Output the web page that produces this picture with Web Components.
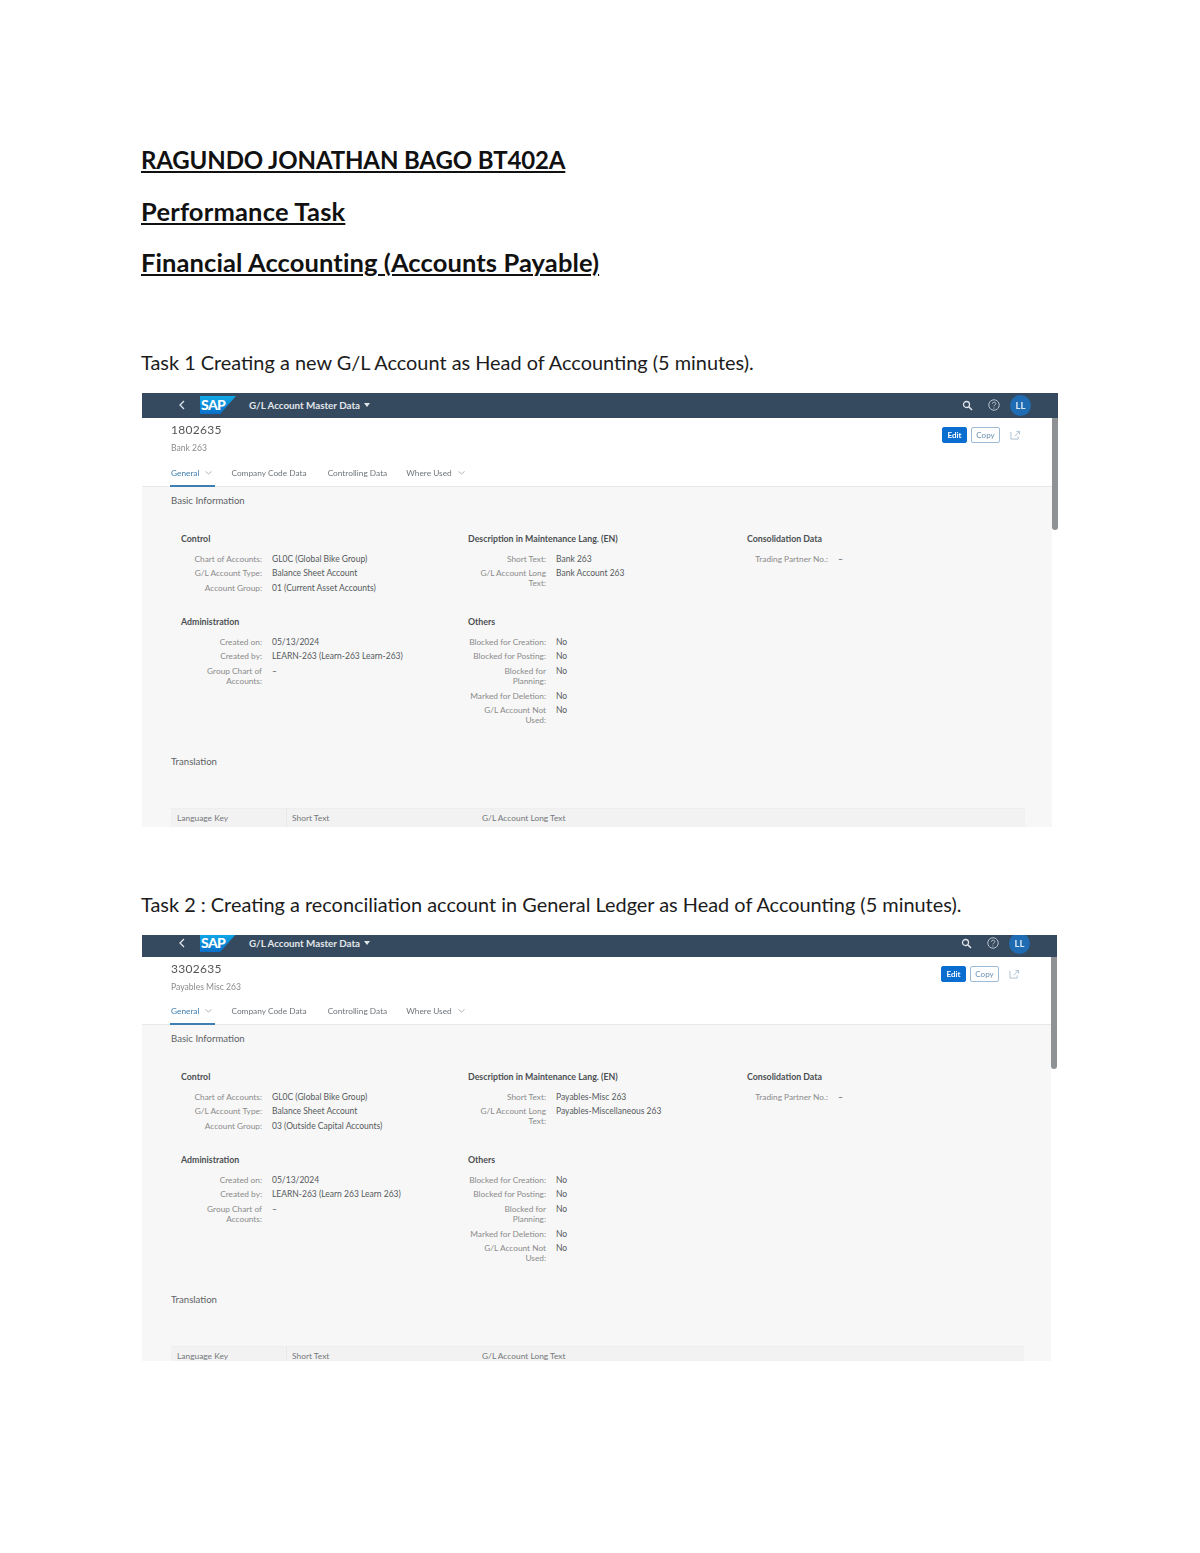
<!DOCTYPE html>
<html lang="en">
<head>
<meta charset="utf-8">
<title>Performance Task</title>
<style>
html,body{margin:0;background:#fff;}
body{font-family:"Lato","Liberation Sans",sans-serif;}
</style>
</head>
<body>
<doc-page>
  <doc-heading size="24" track="-.13">RAGUNDO JONATHAN BAGO BT402A</doc-heading>
  <doc-heading size="25.5" track=".19" style="margin-top:-1px">Performance Task</doc-heading>
  <doc-heading size="25.5" track=".1">Financial Accounting (Accounts Payable)</doc-heading>

  <doc-task style="margin-top:52px">Task 1 Creating a new G/L Account as Head of Accounting (5 minutes).</doc-task>
  <sap-screen account="1802635" name="Bank 263" width="916" height="434" bar="25" head="43" lift="0">
    <sap-group slot="c1" heading="Control">
      <sap-field label="Chart of Accounts:">GL0C (Global Bike Group)</sap-field>
      <sap-field label="G/L Account Type:">Balance Sheet Account</sap-field>
      <sap-field label="Account Group:">01 (Current Asset Accounts)</sap-field>
    </sap-group>
    <sap-group slot="c2" heading="Description in Maintenance Lang. (EN)" wide>
      <sap-field label="Short Text:">Bank 263</sap-field>
      <sap-field label="G/L Account Long&#10;Text:">Bank Account 263</sap-field>
    </sap-group>
    <sap-group slot="c3" heading="Consolidation Data">
      <sap-field label="Trading Partner No.:">–</sap-field>
    </sap-group>
    <sap-group slot="a1" heading="Administration">
      <sap-field label="Created on:">05/13/2024</sap-field>
      <sap-field label="Created by:">LEARN-263 (Learn-263 Learn-263)</sap-field>
      <sap-field label="Group Chart of&#10;Accounts:">–</sap-field>
    </sap-group>
    <sap-group slot="a2" heading="Others" wide>
      <sap-field label="Blocked for Creation:">No</sap-field>
      <sap-field label="Blocked for Posting:">No</sap-field>
      <sap-field label="Blocked for&#10;Planning:">No</sap-field>
      <sap-field label="Marked for Deletion:">No</sap-field>
      <sap-field label="G/L Account Not&#10;Used:">No</sap-field>
    </sap-group>
  </sap-screen>

  <doc-task style="margin-top:63px">Task 2 : Creating a reconciliation account in General Ledger as Head of Accounting (5 minutes).</doc-task>
  <sap-screen account="3302635" name="Payables Misc 263" width="915" height="426" bar="22" head="42" lift="5">
    <sap-group slot="c1" heading="Control">
      <sap-field label="Chart of Accounts:">GL0C (Global Bike Group)</sap-field>
      <sap-field label="G/L Account Type:">Balance Sheet Account</sap-field>
      <sap-field label="Account Group:">03 (Outside Capital Accounts)</sap-field>
    </sap-group>
    <sap-group slot="c2" heading="Description in Maintenance Lang. (EN)" wide>
      <sap-field label="Short Text:">Payables-Misc 263</sap-field>
      <sap-field label="G/L Account Long&#10;Text:">Payables-Miscellaneous 263</sap-field>
    </sap-group>
    <sap-group slot="c3" heading="Consolidation Data">
      <sap-field label="Trading Partner No.:">–</sap-field>
    </sap-group>
    <sap-group slot="a1" heading="Administration">
      <sap-field label="Created on:">05/13/2024</sap-field>
      <sap-field label="Created by:">LEARN-263 (Learn 263 Learn 263)</sap-field>
      <sap-field label="Group Chart of&#10;Accounts:">–</sap-field>
    </sap-group>
    <sap-group slot="a2" heading="Others" wide>
      <sap-field label="Blocked for Creation:">No</sap-field>
      <sap-field label="Blocked for Posting:">No</sap-field>
      <sap-field label="Blocked for&#10;Planning:">No</sap-field>
      <sap-field label="Marked for Deletion:">No</sap-field>
      <sap-field label="G/L Account Not&#10;Used:">No</sap-field>
    </sap-group>
  </sap-screen>
</doc-page>

<script>
class DocPage extends HTMLElement {
  constructor() {
    super();
    this.attachShadow({ mode: 'open' });
    this.shadowRoot.innerHTML = `
<style>
:host{display:block;box-sizing:border-box;height:1553px;padding:142px 0 0 141px;background:#fff;overflow:hidden;}
</style>
<slot></slot>`;
  }
}
customElements.define('doc-page', DocPage);

class DocHeading extends HTMLElement {
  constructor() {
    super();
    this.attachShadow({ mode: 'open' });
    this.shadowRoot.innerHTML = `
<style>
:host{display:block;height:51.5px;line-height:36px;font-weight:700;color:#111;text-decoration:underline;text-decoration-thickness:2px;text-underline-offset:2px;white-space:nowrap;}
</style>
<slot></slot>`;
  }
  connectedCallback() {
    this.style.fontSize = this.getAttribute('size') + 'px';
    this.style.letterSpacing = this.getAttribute('track') + 'px';
  }
}
customElements.define('doc-heading', DocHeading);

class DocTask extends HTMLElement {
  constructor() {
    super();
    this.attachShadow({ mode: 'open' });
    this.shadowRoot.innerHTML = `
<style>
:host{display:block;height:30px;line-height:28px;margin-bottom:15px;font-size:19.9px;color:#1c1c1c;white-space:nowrap;}
</style>
<slot></slot>`;
  }
}
customElements.define('doc-task', DocTask);

class SapField extends HTMLElement {
  constructor() {
    super();
    this.attachShadow({ mode: 'open' });
    this.shadowRoot.innerHTML = `
<style>
:host{display:grid;grid-template-columns:var(--label-w,81px) 1fr;column-gap:10px;font-size:8.5px;line-height:10px;margin-bottom:4.7px;}
.l{color:#8b8b8b;text-align:right;white-space:pre;font-size:8.3px;}
.v{color:#55595c;white-space:nowrap;}
</style>
<div class="l"></div><div class="v"><slot></slot></div>`;
    this.shadowRoot.querySelector('.l').textContent = this.getAttribute('label');
  }
}
customElements.define('sap-field', SapField);

class SapGroup extends HTMLElement {
  constructor() {
    super();
    this.attachShadow({ mode: 'open' });
    this.shadowRoot.innerHTML = `
<style>
:host{display:block;}
.t{font-size:8.8px;font-weight:700;color:#4c5053;line-height:10px;margin-bottom:10px;white-space:nowrap;}
</style>
<div class="t"></div><slot></slot>`;
    this.shadowRoot.querySelector('.t').textContent = this.getAttribute('heading');
  }
  connectedCallback() {
    this.style.setProperty('--label-w', this.hasAttribute('wide') ? '78px' : '81px');
  }
}
customElements.define('sap-group', SapGroup);

class SapShellBar extends HTMLElement {
  constructor() {
    super();
    this.attachShadow({ mode: 'open' });
    this.shadowRoot.innerHTML = `
<style>
:host{display:flex;align-items:center;flex:none;box-sizing:border-box;background:#354a5f;color:#fff;padding:0 27px var(--lift,0) 37px;font-size:9.8px;}
.back{flex:none;width:6px;height:10px;margin-right:15px;}
.logo{flex:none;width:36px;height:18px;margin-right:13px;background:linear-gradient(#0fa9e8,#0a6fc9);clip-path:polygon(0 0,100% 0,56% 100%,0 100%);}
.logo span{display:block;font-size:14px;font-weight:900;line-height:18px;padding-left:1px;letter-spacing:-.6px;}
.title{font-weight:700;color:#e3e7eb;white-space:nowrap;}
.caret{width:0;height:0;border:3px solid transparent;border-top:4px solid #e3e7eb;border-bottom:0;margin-left:4px;}
.spacer{flex:1;}
svg.ic{flex:none;width:11px;height:11px;margin-right:15px;}
svg.help{flex:none;width:12px;height:12px;margin-right:10px;}
.avatar{flex:none;width:21px;height:21px;border-radius:50%;background:#1f6cb3;color:#dfe9f3;font-size:9.5px;font-weight:700;display:flex;align-items:center;justify-content:center;}
</style>
<svg class="back" viewBox="0 0 6 10"><path d="M5 1 1 5l4 4" fill="none" stroke="#dfe5ea" stroke-width="1.3"/></svg>
<div class="logo"><span>SAP</span></div>
<span class="title">G/L Account Master Data</span><span class="caret"></span>
<span class="spacer"></span>
<svg class="ic" viewBox="0 0 11 11"><circle cx="4.500" cy="4.500" r="3" fill="none" stroke="#dfe5ea" stroke-width="1.300"/><path d="m7 7 3 3" stroke="#dfe5ea" stroke-width="1.600"/></svg>
<svg class="help" viewBox="0 0 11 11"><circle cx="5.500" cy="5.500" r="4.800" fill="none" stroke="#b9c3cc" stroke-width=".9"/><path d="M4 4.400c0-2 3.200-2 3.200-.1C7.200 5.500 5.500 5.300 5.500 6.800M5.500 7.800v1" fill="none" stroke="#b9c3cc" stroke-width=".9"/></svg>
<div class="avatar">LL</div>`;
  }
}
customElements.define('sap-shell-bar', SapShellBar);

class SapTabs extends HTMLElement {
  constructor() {
    super();
    this.attachShadow({ mode: 'open' });
    const chev = '<svg width="7" height="4" viewBox="0 0 7 4"><path d="M.5.500 3.500 3l3-2.500" fill="none" stroke="#9aa3aa" stroke-width=".8"/></svg>';
    this.shadowRoot.innerHTML = `
<style>
:host{display:flex;flex:none;height:26px;padding-left:28px;font-size:8.3px;color:#70767b;border-bottom:1px solid #e8e8e8;box-sizing:border-box;}
.tab{display:flex;align-items:center;gap:6px;padding:0 1px;margin-right:19px;height:24px;border-bottom:2px solid transparent;white-space:nowrap;}
.tab.on{color:#3f7eb0;border-bottom-color:#3f7eb0;margin-right:15px;padding-right:3px;}
.tab.cd{margin-right:17px;}
</style>
<div class="tab on">General ${chev}</div>
<div class="tab">Company Code Data</div>
<div class="tab cd">Controlling Data</div>
<div class="tab">Where Used ${chev}</div>`;
  }
}
customElements.define('sap-tabs', SapTabs);

class SapScreen extends HTMLElement {
  constructor() {
    super();
    this.attachShadow({ mode: 'open' });
    this.shadowRoot.innerHTML = `
<style>
:host{display:block;position:relative;margin-left:1px;overflow:hidden;background:#fff;}
.frame{display:flex;flex-direction:column;height:100%;filter:blur(.4px);}
sap-shell-bar{height:var(--bar);}
.head{flex:none;display:flex;justify-content:space-between;padding:4px 32px 0 29px;height:var(--head);box-sizing:border-box;margin-right:6px;}
.acc{font-size:12px;line-height:16px;color:#555;letter-spacing:.3px;}
.nm{font-size:8.6px;line-height:12px;color:#8b8b8b;margin-top:4px;}
.acts{display:flex;align-items:flex-start;gap:4px;padding-top:5px;}
.btn{box-sizing:border-box;height:16px;border-radius:2px;font-size:8px;line-height:14px;text-align:center;border:1px solid #0a6ed1;}
.edit{width:25px;background:#0a6ed1;color:#fff;font-weight:700;}
.copy{width:29px;background:#fff;color:#6a8fb0;border-color:#9dbbd6;}
.share{width:10px;height:10px;margin:3px 0 0 6px;}
.main{flex:1;min-height:0;display:flex;flex-direction:column;background:#f7f7f7;margin-right:6px;padding:0 27px 0 29px;}
.sec{flex:none;font-size:9.6px;line-height:12px;color:#5e6265;margin-top:8px;}
.form{flex:none;display:grid;grid-template-columns:287px 279px 1fr;padding:27px 0 0 10px;}
.row1{height:83px;}
.row2{height:131px;}
.tbl{flex:none;display:grid;grid-template-columns:115px 190px 1fr;height:19px;background:#f2f2f2;border-top:1px solid #eeeeee;box-sizing:border-box;font-size:8.4px;color:#74787b;line-height:18px;margin-top:40px;}
.tbl div{padding-left:6px;white-space:nowrap;}
.tbl div:nth-child(2){border-left:1px solid #e8e8e8;padding-left:5px;}
.thumb{position:absolute;right:0;top:var(--bar);width:6px;height:112px;background:#8f9294;border-radius:0 0 3px 3px;}
</style>
<div class="frame">
  <sap-shell-bar></sap-shell-bar>
  <div class="head">
    <div><div class="acc"></div><div class="nm"></div></div>
    <div class="acts">
      <div class="btn edit">Edit</div>
      <div class="btn copy">Copy</div>
      <svg class="share" viewBox="0 0 11 11"><path d="M1 2v8h8V7M5 7l5-5M7 1.500h3.500V5" fill="none" stroke="#9db4c8" stroke-width=".9"/></svg>
    </div>
  </div>
  <sap-tabs></sap-tabs>
  <div class="main">
    <div class="sec">Basic Information</div>
    <div class="form">
      <div class="row1"><slot name="c1"></slot></div>
      <div class="row1"><slot name="c2"></slot></div>
      <div class="row1"><slot name="c3"></slot></div>
      <div class="row2"><slot name="a1"></slot></div>
      <div class="row2"><slot name="a2"></slot></div>
      <div class="row2"></div>
    </div>
    <div class="sec">Translation</div>
    <div class="tbl"><div>Language Key</div><div>Short Text</div><div>G/L Account Long Text</div></div>
  </div>
  <div class="thumb"></div>
</div>`;
    this.shadowRoot.querySelector('.acc').textContent = this.getAttribute('account');
    this.shadowRoot.querySelector('.nm').textContent = this.getAttribute('name');
  }
  connectedCallback() {
    this.style.width = this.getAttribute('width') + 'px';
    this.style.height = this.getAttribute('height') + 'px';
    this.style.setProperty('--bar', this.getAttribute('bar') + 'px');
    this.style.setProperty('--head', this.getAttribute('head') + 'px');
    this.style.setProperty('--lift', this.getAttribute('lift') + 'px');
  }
}
customElements.define('sap-screen', SapScreen);
</script>
</body>
</html>
